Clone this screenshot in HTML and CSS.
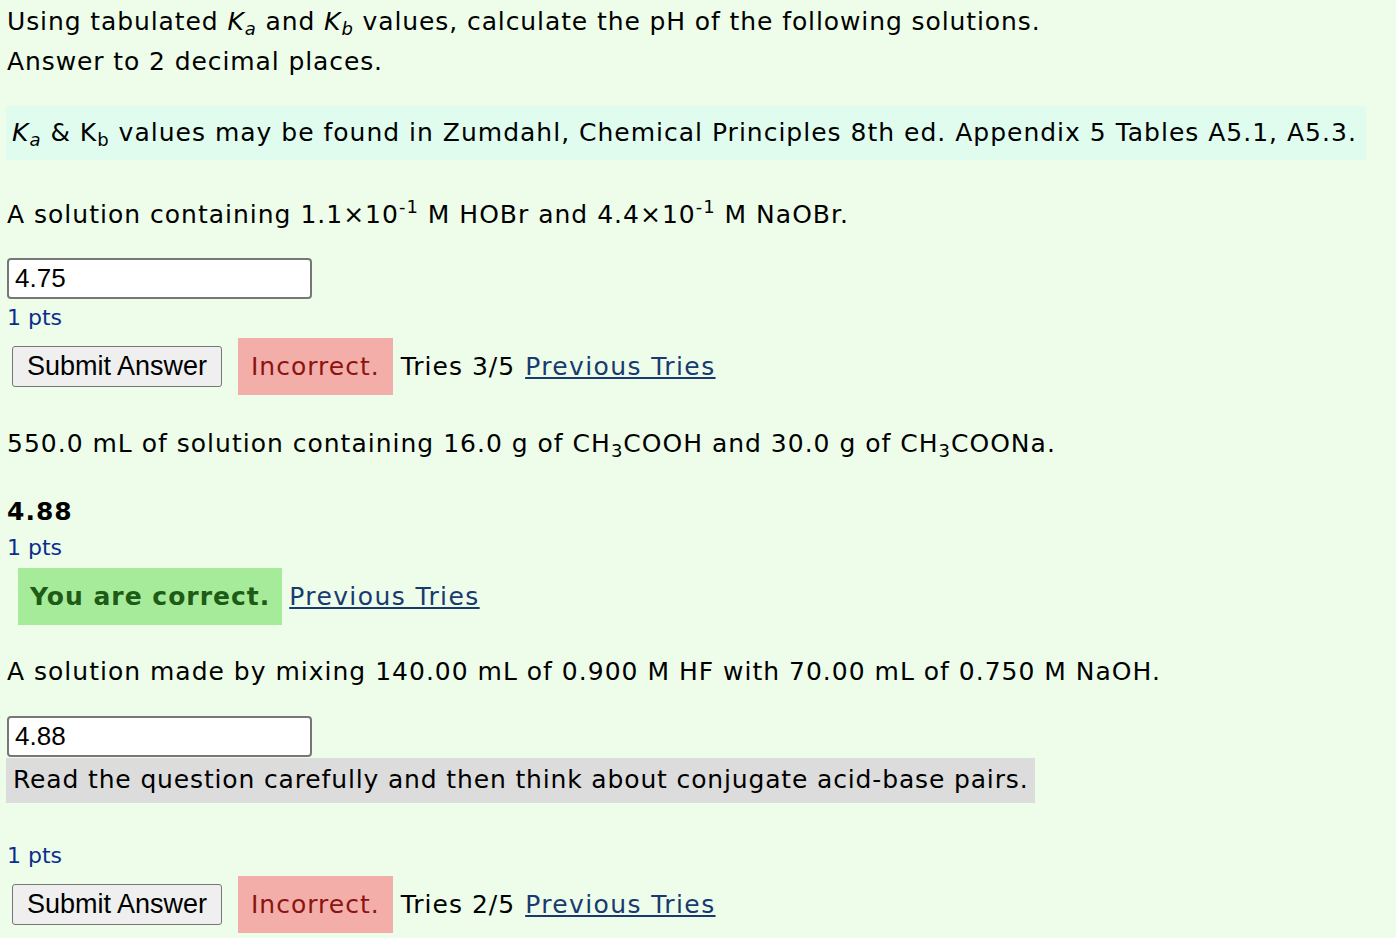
FILE: index.html
```html
<!DOCTYPE html>
<html lang="en">
<head>
  <meta charset="UTF-8" />
  <title>Buffer pH</title>
  <link rel="stylesheet" href="styles.css">
</head>
<body>
  <div class="intro">
    Using tabulated <i>K<sub>a</sub></i> and <i>K<sub>b</sub></i> values, calculate the pH of the following solutions.<br>
    Answer to 2 decimal places.
  </div>

  <div class="note"><i>K<sub>a</sub></i> &amp; K<sub>b</sub> values may be found in Zumdahl, Chemical Principles 8th ed. Appendix 5 Tables A5.1, A5.3.</div>

  <div class="question">
    <div class="prompt">A solution containing 1.1&times;10<sup>-1</sup> M HOBr and 4.4&times;10<sup>-1</sup> M NaOBr.</div>
    <input class="answer" type="text" value="4.75" />
    <div class="pts">1 pts</div>
    <div class="actions">
      <button class="submit">Submit Answer</button>
      <span class="result bad">Incorrect.</span>
      <span class="tries">Tries 3/5</span>
      <a href="#" class="prev">Previous Tries</a>
    </div>
  </div>

  <div class="question">
    <div class="prompt">550.0 mL of solution containing 16.0 g of CH<sub>3</sub>COOH and 30.0 g of CH<sub>3</sub>COONa.</div>
    <div class="given">4.88</div>
    <div class="pts tight">1 pts</div>
    <div class="actions">
      <span class="result good">You are correct.</span>
      <a href="#" class="prev">Previous Tries</a>
    </div>
  </div>

  <div class="question">
    <div class="prompt">A solution made by mixing 140.00 mL of 0.900 M HF with 70.00 mL of 0.750 M NaOH.</div>
    <input class="answer" type="text" value="4.88" />
    <div class="hint">Read the question carefully and then think about conjugate acid-base pairs.</div>
    <div class="pts spaced">1 pts</div>
    <div class="actions">
      <button class="submit">Submit Answer</button>
      <span class="result bad">Incorrect.</span>
      <span class="tries">Tries 2/5</span>
      <a href="#" class="prev">Previous Tries</a>
    </div>
  </div>
</body>
</html>
```

FILE: styles.css
```css
* {
  box-sizing: border-box;
}

body {
  margin: 0;
  padding: 2px 6px 0 6px;
  background: #edfdea;
  color: #000;
  font-family: Verdana, 'DejaVu Sans', sans-serif;
  font-size: 25px;
  letter-spacing: 1px;
}

sub, sup {
  font-size: 0.72em;
  line-height: 0;
}

sub {
  vertical-align: -0.3em;
}

sup {
  vertical-align: 0.55em;
}

.intro {
  line-height: 40px;
  padding-left: 1px;
  letter-spacing: 0.9px;
}

.note {
  margin-top: 24px;
  background: #e0fcef;
  padding: 13px 6px;
  line-height: 28px;
  width: 1360px;
}

.question {
  margin-top: 35px;
}

.question + .question {
  margin-top: 29px;
}

.question:last-child {
  margin-top: 27px;
}

.prompt {
  line-height: 40px;
  padding-left: 1px;
}

.answer {
  display: block;
  margin: 23px 0 0 1px;
  width: 305px;
  height: 41px;
  border: 2px solid #777;
  border-radius: 4px;
  background: #fff;
  padding: 0 6px;
  font-family: 'Liberation Sans', Arial, sans-serif;
  font-size: 26px;
  letter-spacing: 0;
  color: #000;
}

.question:last-child .answer {
  margin-top: 24px;
}

.pts {
  margin-top: 5px;
  padding-left: 1px;
  line-height: 28px;
  font-size: 22px;
  letter-spacing: 0;
  color: #0b2d8c;
}

.pts.tight {
  margin-top: 2px;
}

.pts.spaced {
  margin-top: 39px;
}

.given {
  margin-top: 28px;
  padding-left: 1px;
  line-height: 40px;
  font-weight: bold;
}

.actions {
  display: flex;
  align-items: center;
  margin-top: 6px;
  padding-left: 6px;
}

.submit {
  height: 41px;
  width: 210px;
  padding: 0;
  background: #efefef;
  border: 1px solid #767676;
  border-radius: 3px;
  font-family: 'Liberation Sans', Arial, sans-serif;
  font-size: 27px;
  letter-spacing: 0;
  color: #000;
  margin-right: 16px;
}

.result {
  display: inline-block;
  line-height: 57px;
  padding: 0 13px;
}

.bad {
  background: #f4aeaa;
  color: #8a1410;
}

.good {
  background: #a6eb9a;
  color: #1e5b16;
  font-weight: bold;
  margin-left: 6px;
  padding: 0 12px;
}

.tries {
  margin-left: 8px;
}

.prev {
  margin-left: 10px;
  color: #183a70;
  text-decoration: underline;
  letter-spacing: 1.4px;
}

.result.good + .prev {
  margin-left: 7px;
}

.hint {
  display: inline-block;
  margin-top: 1px;
  background: #dcdcdc;
  padding: 7px 7px 9px;
  line-height: 29px;
  letter-spacing: 0.85px;
}
```
